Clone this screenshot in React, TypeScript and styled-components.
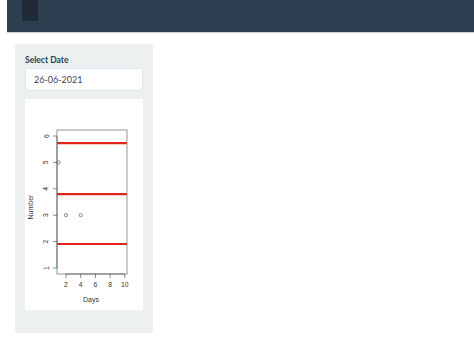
import styled, { createGlobalStyle } from "styled-components";

const GlobalStyle = createGlobalStyle`
  body {
    margin: 0;
    background: #ffffff;
    font-family: Lato, "Open Sans", sans-serif;
  }
`;

const yTicks = [1, 2, 3, 4, 5, 6];
const xTicks = [2, 4, 6, 8, 10];
const hLines = [5.73, 3.8, 1.91];
const points = [
  { x: 1, y: 5 },
  { x: 2, y: 3 },
  { x: 4, y: 3 },
];

// plot frame, in panel coordinates
const box = { left: 32, right: 102, top: 31, bottom: 175 };
const sx = (v: number) => 41 + (v - 2) * 7.35;
const sy = (v: number) => 169 - (v - 1) * 26.4;

const AxisText = styled.text`
  font-family: "Liberation Sans", Arial, sans-serif;
  font-size: 6.8px;
  fill: #333333;
`;

const TitleText = styled(AxisText)`
  font-size: 7px;
`;

const Plot = () => (
  <svg width="118" height="211" viewBox="0 0 118 211">
    {hLines.map((v) => (
      <line
        key={v}
        x1={box.left}
        x2={box.right}
        y1={sy(v)}
        y2={sy(v)}
        stroke="#e3241b"
        strokeWidth="2.2"
      />
    ))}
    <rect
      x={box.left}
      y={box.top}
      width={box.right - box.left}
      height={box.bottom - box.top}
      fill="none"
      stroke="#7a7a7a"
      strokeWidth="0.8"
    />
    {points.map((p) => (
      <circle
        key={p.x}
        cx={sx(p.x)}
        cy={sy(p.y)}
        r="1.6"
        fill="none"
        stroke="#444"
        strokeWidth="0.6"
      />
    ))}
    <line x1={box.left} x2={box.left} y1={sy(1)} y2={sy(6)} stroke="#555" strokeWidth="0.7" />
    {yTicks.map((v) => (
      <g key={v}>
        <line x1={box.left - 4} x2={box.left} y1={sy(v)} y2={sy(v)} stroke="#555" strokeWidth="0.7" />
        <AxisText
          x={21}
          y={sy(v)}
          textAnchor="middle"
          dominantBaseline="central"
          transform={`rotate(-90 21 ${sy(v)})`}
        >
          {v}
        </AxisText>
      </g>
    ))}
    <line x1={sx(2)} x2={sx(10)} y1={box.bottom} y2={box.bottom} stroke="#555" strokeWidth="0.7" />
    {xTicks.map((v) => (
      <g key={v}>
        <line x1={sx(v)} x2={sx(v)} y1={box.bottom} y2={box.bottom + 4} stroke="#555" strokeWidth="0.7" />
        <AxisText x={sx(v)} y={185} textAnchor="middle" dominantBaseline="central">
          {v}
        </AxisText>
      </g>
    ))}
    <TitleText x={66} y={200} textAnchor="middle" dominantBaseline="central">
      Days
    </TitleText>
    <TitleText
      x={5}
      y={108}
      textAnchor="middle"
      dominantBaseline="central"
      transform="rotate(-90 5 108)"
    >
      Number
    </TitleText>
  </svg>
);

export default function App() {
  return (
    <>
      <GlobalStyle />
      <Navbar>
        <Brand />
      </Navbar>
      <Main>
        <Sidebar>
          <Label>Select Date</Label>
          <DateInput>26-06-2021</DateInput>
          <PlotPanel>
            <Plot />
          </PlotPanel>
        </Sidebar>
      </Main>
    </>
  );
}

const Navbar = styled.div`
  margin-left: 7px;
  height: 32px;
  background: #2c3e50;
  border-bottom: 1px solid #c9d3dc;
  padding-left: 15px;
  display: flex;
  align-items: flex-start;
`;

const Brand = styled.div`
  width: 16px;
  height: 21px;
  background: #1f2b38;
`;

const Main = styled.div`
  padding: 11px 0 0 15px;
`;

const Sidebar = styled.div`
  width: 138px;
  height: 289px;
  box-sizing: border-box;
  background: #ecf0f1;
  border-radius: 2px;
  padding: 11px 10px;
`;

const Label = styled.div`
  font-size: 8.5px;
  font-weight: 700;
  color: #2c3e50;
  line-height: 10px;
  margin-bottom: 3px;
`;

const DateInput = styled.div`
  height: 23px;
  box-sizing: border-box;
  background: #ffffff;
  border: 1px solid #dfe5ea;
  border-radius: 2px;
  padding: 0 8px;
  display: flex;
  align-items: center;
  font-size: 9px;
  color: #3b4550;
`;

const PlotPanel = styled.div`
  margin-top: 8px;
  width: 118px;
  height: 211px;
  background: #ffffff;
  display: flex;
`;
